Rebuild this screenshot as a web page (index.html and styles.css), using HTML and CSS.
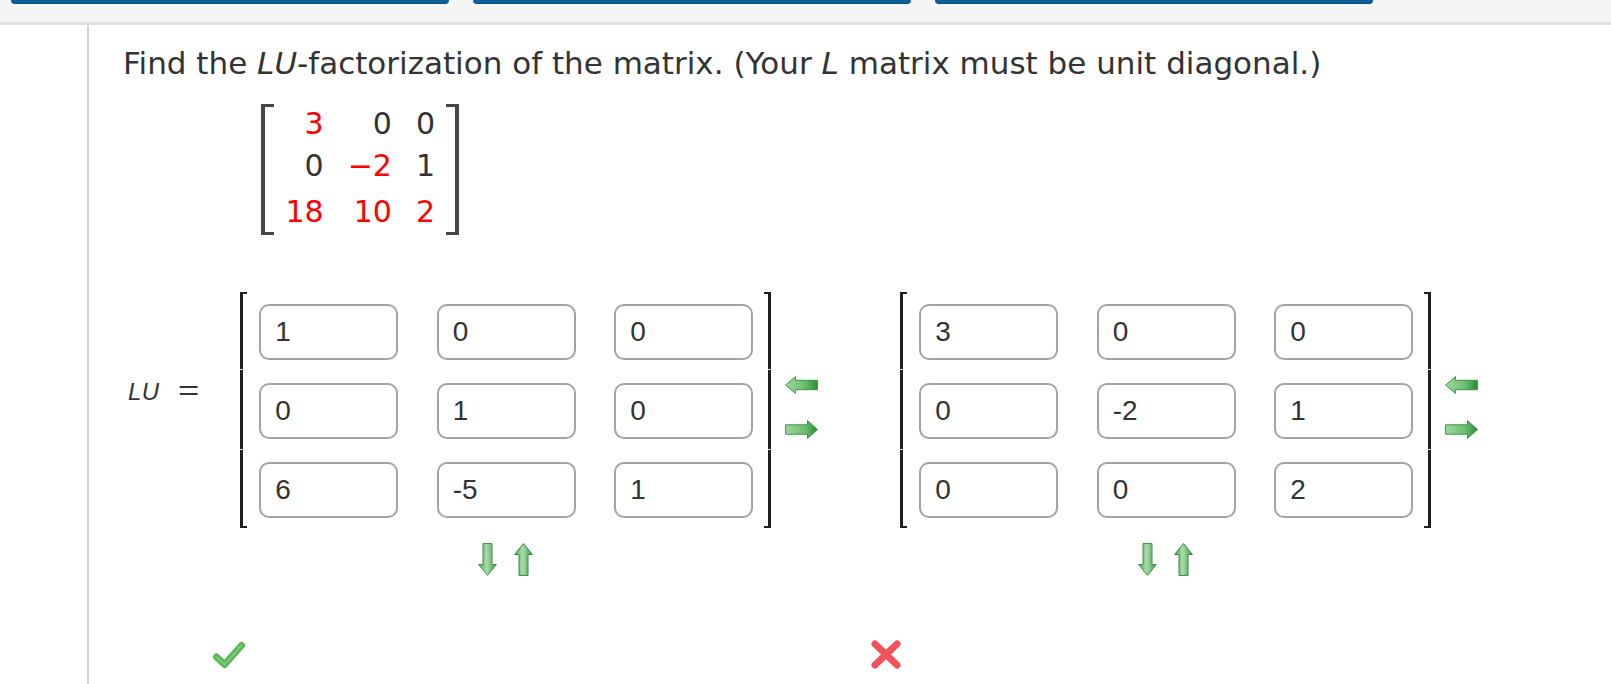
FILE: index.html
```html
<!DOCTYPE html>
<html lang="en">
<head>
<meta charset="utf-8">
<title>LU factorization</title>
<link rel="stylesheet" href="styles.css">
</head>
<body>
<div class="topbar">
  <div class="tab"></div>
  <div class="tab"></div>
  <div class="tab"></div>
</div>
<div class="main">
  <p class="question">Find the <i>LU</i>-factorization of the matrix. (Your <i>L</i> matrix must be unit diagonal.)</p>

  <div class="given">
    <div class="gbrk gbrk-l"></div>
    <div class="ggrid">
      <span class="red">3</span><span>0</span><span>0</span>
      <span>0</span><span class="red">&minus;2</span><span>1</span>
      <span class="red">18</span><span class="red">10</span><span class="red">2</span>
    </div>
    <div class="gbrk gbrk-r"></div>
  </div>

  <div class="answer">
    <div class="lu-label"><i>LU</i><span class="eq">=</span></div>

    <div class="mblock">
      <div class="mat">
        <div class="brk brk-l"></div>
        <div class="cells">
          <div class="cell">1</div><div class="cell">0</div><div class="cell">0</div>
          <div class="cell">0</div><div class="cell">1</div><div class="cell">0</div>
          <div class="cell">6</div><div class="cell">-5</div><div class="cell">1</div>
        </div>
        <div class="brk brk-r"></div>
      </div>
      <div class="ud">
        <svg class="arr-v" width="19" height="33" viewBox="0 0 19 33"><defs><linearGradient id="gv1" x1="0" y1="0" x2="1" y2="0"><stop offset="0" stop-color="#4fa857"/><stop offset="0.45" stop-color="#a9dca9"/><stop offset="1" stop-color="#3f9a49"/></linearGradient></defs><path d="M5 0.6 H14 V21.5 H18.4 L9.5 32.4 L0.6 21.5 H5 Z" fill="url(#gv1)" stroke="#3a9445" stroke-width="1"/></svg>
        <svg class="arr-v" width="19" height="33" viewBox="0 0 19 33"><defs><linearGradient id="gv2" x1="0" y1="0" x2="1" y2="0"><stop offset="0" stop-color="#4fa857"/><stop offset="0.45" stop-color="#a9dca9"/><stop offset="1" stop-color="#3f9a49"/></linearGradient></defs><path d="M9.5 0.6 L18.4 11.5 H14 V32.4 H5 V11.5 H0.6 Z" fill="url(#gv2)" stroke="#2f8a3b" stroke-width="1"/></svg>
      </div>
    </div>

    <div class="lr">
      <svg width="33" height="18" viewBox="0 0 33 18"><defs><linearGradient id="gh1" x1="0" y1="0" x2="1" y2="0"><stop offset="0" stop-color="#9ed89e"/><stop offset="0.6" stop-color="#6cbf6e"/><stop offset="1" stop-color="#2c8a3a"/></linearGradient></defs><path d="M0.6 9 L10.5 0.6 V4.3 H32.4 V13.7 H10.5 V17.4 Z" fill="url(#gh1)" stroke="#3b9646" stroke-width="1"/></svg>
      <svg width="33" height="19" viewBox="0 0 33 19"><defs><linearGradient id="gh2" x1="0" y1="0" x2="1" y2="0"><stop offset="0" stop-color="#9ed89e"/><stop offset="0.6" stop-color="#6cbf6e"/><stop offset="1" stop-color="#2c8a3a"/></linearGradient></defs><path d="M32.4 9.5 L22.5 0.6 V4.8 H0.6 V14.2 H22.5 V18.4 Z" fill="url(#gh2)" stroke="#3b9646" stroke-width="1"/></svg>
    </div>

    <div class="mblock mblock-u">
      <div class="mat">
        <div class="brk brk-l"></div>
        <div class="cells">
          <div class="cell">3</div><div class="cell">0</div><div class="cell">0</div>
          <div class="cell">0</div><div class="cell">-2</div><div class="cell">1</div>
          <div class="cell">0</div><div class="cell">0</div><div class="cell">2</div>
        </div>
        <div class="brk brk-r"></div>
      </div>
      <div class="ud">
        <svg class="arr-v" width="19" height="33" viewBox="0 0 19 33"><defs><linearGradient id="gv3" x1="0" y1="0" x2="1" y2="0"><stop offset="0" stop-color="#4fa857"/><stop offset="0.45" stop-color="#a9dca9"/><stop offset="1" stop-color="#3f9a49"/></linearGradient></defs><path d="M5 0.6 H14 V21.5 H18.4 L9.5 32.4 L0.6 21.5 H5 Z" fill="url(#gv3)" stroke="#3a9445" stroke-width="1"/></svg>
        <svg class="arr-v" width="19" height="33" viewBox="0 0 19 33"><defs><linearGradient id="gv4" x1="0" y1="0" x2="1" y2="0"><stop offset="0" stop-color="#4fa857"/><stop offset="0.45" stop-color="#a9dca9"/><stop offset="1" stop-color="#3f9a49"/></linearGradient></defs><path d="M9.5 0.6 L18.4 11.5 H14 V32.4 H5 V11.5 H0.6 Z" fill="url(#gv4)" stroke="#2f8a3b" stroke-width="1"/></svg>
      </div>
    </div>

    <div class="lr">
      <svg width="33" height="18" viewBox="0 0 33 18"><defs><linearGradient id="gh3" x1="0" y1="0" x2="1" y2="0"><stop offset="0" stop-color="#9ed89e"/><stop offset="0.6" stop-color="#6cbf6e"/><stop offset="1" stop-color="#2c8a3a"/></linearGradient></defs><path d="M0.6 9 L10.5 0.6 V4.3 H32.4 V13.7 H10.5 V17.4 Z" fill="url(#gh3)" stroke="#3b9646" stroke-width="1"/></svg>
      <svg width="33" height="19" viewBox="0 0 33 19"><defs><linearGradient id="gh4" x1="0" y1="0" x2="1" y2="0"><stop offset="0" stop-color="#9ed89e"/><stop offset="0.6" stop-color="#6cbf6e"/><stop offset="1" stop-color="#2c8a3a"/></linearGradient></defs><path d="M32.4 9.5 L22.5 0.6 V4.8 H0.6 V14.2 H22.5 V18.4 Z" fill="url(#gh4)" stroke="#3b9646" stroke-width="1"/></svg>
    </div>
  </div>

  <div class="feedback">
    <svg class="check" width="34" height="28" viewBox="0 0 34 28"><polyline points="4.5,16 12.5,23.5 29.5,4.5" fill="none" stroke="#5cb65a" stroke-width="7" stroke-linecap="round" stroke-linejoin="round"/><polyline points="4.5,16 12.5,23.5 29.5,4.5" fill="none" stroke="#7ccb76" stroke-width="2" stroke-linecap="round" stroke-linejoin="round"/></svg>
    <svg class="cross" width="32" height="31" viewBox="0 0 32 31"><g stroke="#f0535b" stroke-width="7" stroke-linecap="round"><line x1="5" y1="5" x2="27" y2="26"/><line x1="27" y1="5" x2="5" y2="26"/></g></svg>
  </div>
</div>
</body>
</html>
```

FILE: styles.css
```css
html, body {
  margin: 0;
  padding: 0;
  background: #ffffff;
}

body {
  font-family: "DejaVu Sans", Verdana, sans-serif;
  color: #333333;
  overflow: hidden;
}

.topbar {
  height: 22px;
  background: #f5f5f5;
  border-bottom: 3px solid #e1e1e1;
  display: flex;
  gap: 24px;
  padding-left: 11px;
}

.tab {
  width: 438px;
  height: 3px;
  background: #0d5f97;
  border-bottom: 1px solid #0a4c7c;
  border-radius: 0 0 6px 6px;
}

.main {
  margin-left: 87px;
  border-left: 2px solid #d4d4d4;
  padding: 20px 0 0 34px;
  height: 639px;
}

.question {
  margin: 0;
  font-size: 31px;
  line-height: 36px;
  white-space: nowrap;
}

.question i {
  font-style: italic;
}

/* given matrix */
.given {
  margin: 23px 0 0 138px;
  display: flex;
  height: 131px;
}

.gbrk {
  width: 13px;
  box-sizing: border-box;
  border-top: 3px solid #474747;
  border-bottom: 3px solid #474747;
}

.gbrk-l {
  border-left: 4px solid #474747;
}

.gbrk-r {
  border-right: 4px solid #474747;
}

.ggrid {
  display: grid;
  grid-template-columns: repeat(3, auto);
  grid-template-rows: 40px 44px 47px;
  column-gap: 24px;
  justify-items: end;
  align-items: center;
  padding: 0 11px 0 11.5px;
  font-size: 30px;
  line-height: 1;
  color: #333333;
}

.red {
  color: #ff0000;
}

/* answer row */
.answer {
  display: flex;
  align-items: flex-start;
  margin: 56.6px 0 0 5px;
}

.lu-label {
  flex: 0 0 112px;
  margin-top: 86px;
  font-family: "Liberation Sans", Arial, sans-serif;
  font-size: 24px;
  line-height: 26px;
  color: #333333;
  white-space: nowrap;
}

.lu-label i {
  letter-spacing: 0.5px;
}

.eq {
  display: inline-block;
  margin-left: 18px;
  font-size: 27px;
  line-height: 26px;
  transform: scaleX(1.35);
  transform-origin: left center;
}

.mblock {
  display: flex;
  flex-direction: column;
  align-items: center;
}

.mblock-u {
  margin-left: 82px;
}

.mat {
  display: flex;
  height: 236px;
}

.brk {
  width: 7px;
  box-sizing: border-box;
  border-top: 2px solid #1f1f1f;
  border-bottom: 2px solid #1f1f1f;
  background-repeat: no-repeat;
  background-size: 3px 100%;
  background-image: linear-gradient(to bottom,
    #1f1f1f 0, #1f1f1f 75px,
    #d8d8d8 75px, #d8d8d8 76px,
    #1f1f1f 76px, #1f1f1f 155px,
    #d8d8d8 155px, #d8d8d8 156px,
    #1f1f1f 156px);
}

.brk-l {
  background-position: left top;
}

.brk-r {
  background-position: right top;
}

.cells {
  display: grid;
  grid-template-columns: repeat(3, 139px);
  grid-auto-rows: 56px;
  column-gap: 38.5px;
  row-gap: 23.3px;
  padding: 12px 11px 0 12.3px;
}

.cell {
  box-sizing: border-box;
  height: 56px;
  border: 2px solid #a4a4a4;
  border-radius: 10px;
  padding-left: 14px;
  display: flex;
  align-items: center;
  font-family: "Liberation Sans", Arial, sans-serif;
  font-size: 28px;
  color: #333333;
  background: #ffffff;
}

.ud {
  display: flex;
  gap: 17.7px;
  margin-top: 15px;
}

.arr-v {
  display: block;
}

.lr {
  display: flex;
  flex-direction: column;
  gap: 25.7px;
  margin: 84.7px 0 0 13.7px;
}

.lr svg {
  display: block;
}

/* feedback */
.feedback {
  display: flex;
  align-items: flex-start;
  margin: 63px 0 0 89px;
}

.check {
  display: block;
  margin-top: 2px;
}

.cross {
  display: block;
  margin-left: 624px;
}
```
